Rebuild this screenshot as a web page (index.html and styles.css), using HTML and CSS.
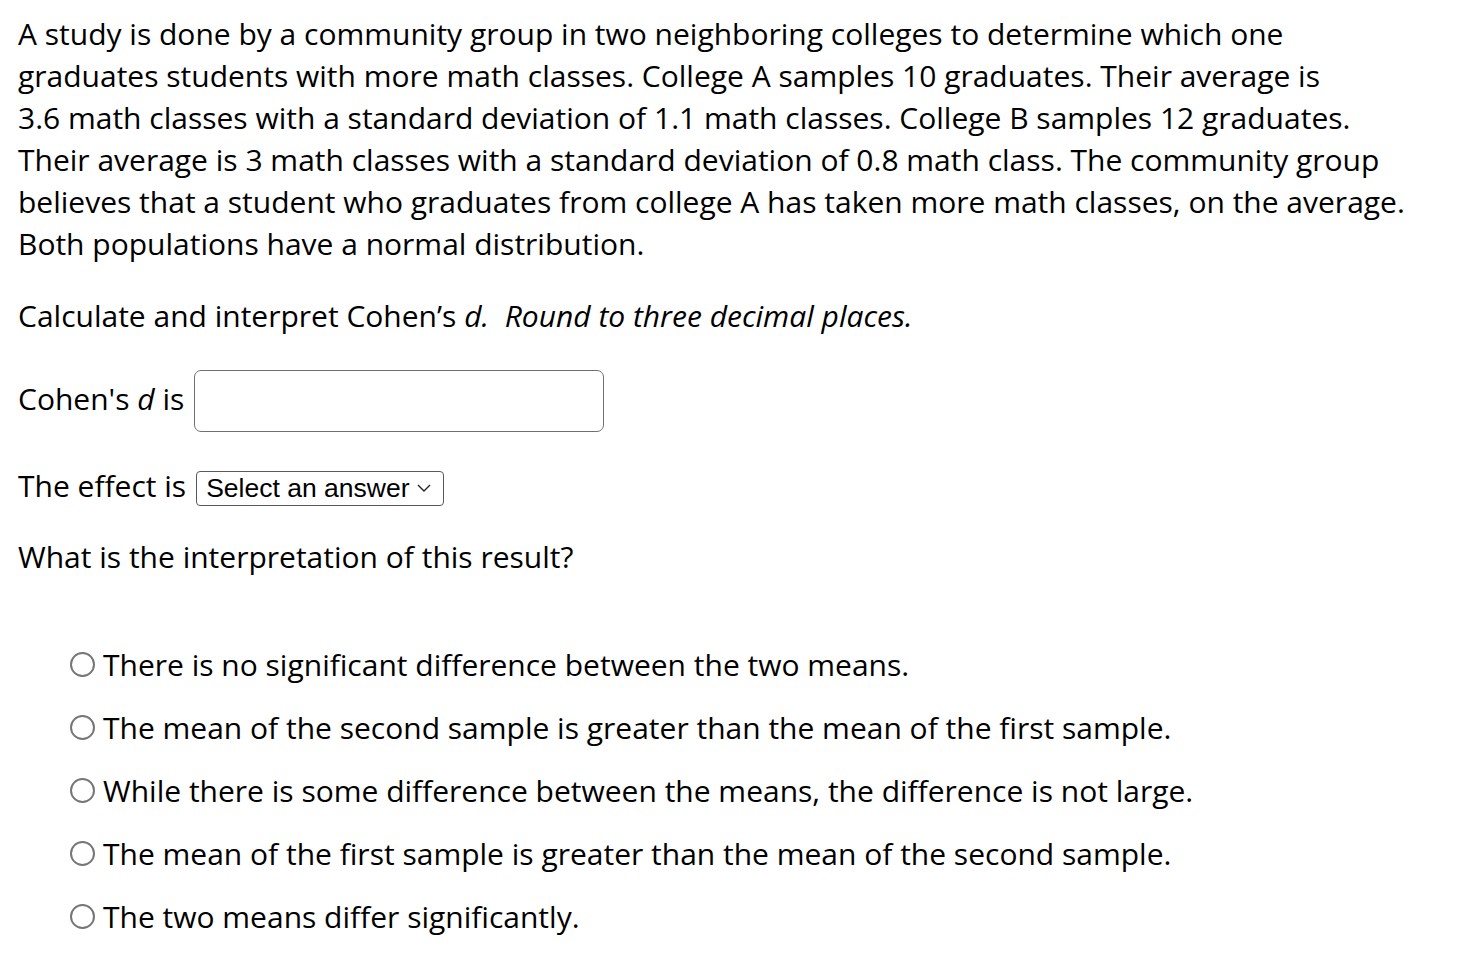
FILE: index.html
```html
<!DOCTYPE html>
<html>
<head>
<meta charset="utf-8">
<link rel="stylesheet" href="styles.css">
</head>
<body>
<div class="page">
  <p class="intro">A study is done by a community group in two neighboring colleges to determine which one<br>graduates students with more math classes. College A samples 10 graduates. Their average is<br>3.6 math classes with a standard deviation of 1.1 math classes. College B samples 12 graduates.<br>Their average is 3 math classes with a standard deviation of 0.8 math class. The community group<br>believes that a student who graduates from college A has taken more math classes, on the average.<br>Both populations have a normal distribution.</p>
  <p class="task">Calculate and interpret Cohen’s <i>d.</i>&nbsp; <i>Round to three decimal places.</i></p>
  <div class="row answer-row">
    <span class="label">Cohen's <i>d</i> is</span>
    <input class="answer" type="text">
  </div>
  <div class="row effect-row">
    <span>The effect is</span>
    <span class="select">Select an answer<svg class="chev" width="16" height="10" viewBox="0 0 16 10"><path d="M2 2 L8 8 L14 2" fill="none" stroke="#222" stroke-width="1.4"/></svg></span>
  </div>
  <p class="question">What is the interpretation of this result?</p>
  <ul class="options">
    <li><span class="radio"></span>There is no significant difference between the two means.</li>
    <li><span class="radio"></span>The mean of the second sample is greater than the mean of the first sample.</li>
    <li><span class="radio"></span>While there is some difference between the means, the difference is not large.</li>
    <li><span class="radio"></span>The mean of the first sample is greater than the mean of the second sample.</li>
    <li><span class="radio"></span>The two means differ significantly.</li>
  </ul>
</div>
</body>
</html>
```

FILE: styles.css
```css
html, body {
  margin: 0;
  padding: 0;
  background: #fff;
}
.page {
  padding: 13px 18px;
  font-family: "Open Sans", sans-serif;
  font-size: 30px;
  line-height: 42px;
  color: #000;
}
p {
  margin: 0;
}
.intro {
  margin-bottom: 30px;
}
.task {
  margin-bottom: 33px;
}
.row {
  display: flex;
  align-items: center;
  gap: 10px;
}
.answer-row {
  height: 62px;
  margin-bottom: 33px;
}
.answer-row .label {
  margin-top: -5px;
}
.answer {
  width: 410px;
  height: 62px;
  box-sizing: border-box;
  border: 1.5px solid #707070;
  border-radius: 7px;
  margin: 0;
  padding: 0 8px;
  font: inherit;
}
.effect-row {
  height: 42px;
  margin-bottom: 29px;
}
.select {
  display: inline-flex;
  align-items: center;
  box-sizing: border-box;
  height: 35px;
  width: 248px;
  border: 1.5px solid #5a5a5a;
  border-radius: 4px;
  padding: 0 0 0 9px;
  font-family: "Liberation Sans", Arial, sans-serif;
  font-size: 26.5px;
  line-height: 33px;
  color: #000;
  margin-top: 4px;
}
.chev {
  margin-left: 7px;
}
.question {
  margin-bottom: 55px;
}
.options {
  list-style: none;
  margin: 0;
  padding: 0 0 0 52px;
}
.options li {
  display: flex;
  align-items: center;
  height: 63px;
}
.radio {
  width: 25px;
  height: 25px;
  box-sizing: border-box;
  border: 2px solid #767676;
  border-radius: 50%;
  margin-right: 8px;
  flex: none;
}
```
